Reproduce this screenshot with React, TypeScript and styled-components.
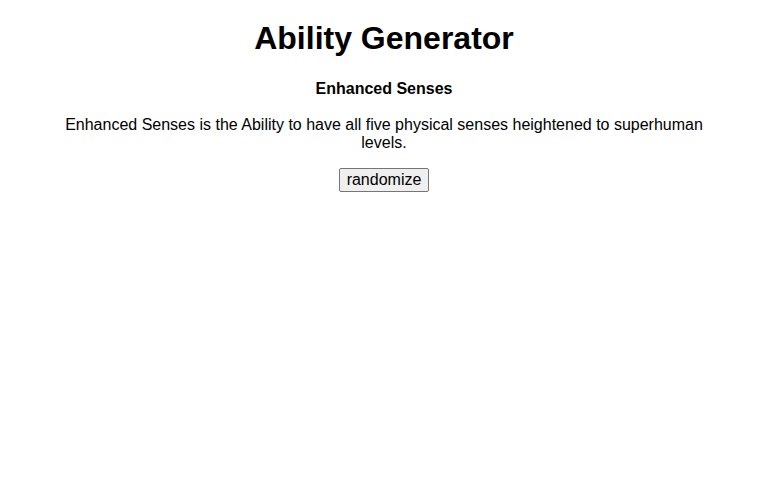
import React from "react";
import styled, { createGlobalStyle } from "styled-components";

const Global = createGlobalStyle`
  body {
    margin: 8px;
    background: #ffffff;
    color: #000000;
    font-family: "Liberation Sans", Arial, sans-serif;
  }
`;

const Page = styled.div`
  display: flex;
  flex-direction: column;
  align-items: center;
  text-align: center;
`;

const Title = styled.h1`
  font-size: 32px;
  font-weight: bold;
  margin: 11.5px 0 23.5px;
`;

const AbilityName = styled.h4`
  font-size: 16px;
  font-weight: bold;
  margin: 0 0 18px;
`;

const Description = styled.p`
  font-size: 16px;
  max-width: 660px;
  margin: 0 0 16px;
`;

const Button = styled.button`
  font-family: "Liberation Sans", Arial, sans-serif;
  font-size: 16px;
  color: #000;
  background: #efefef;
  border: 1px solid #767676;
  border-radius: 2px;
  padding: 2px 7px;
`;

export default function App() {
  return (
    <>
      <Global />
      <Page>
        <Title>Ability Generator</Title>
        <AbilityName>Enhanced Senses</AbilityName>
        <Description>
          Enhanced Senses is the Ability to have all five physical senses heightened to superhuman levels.
        </Description>
        <Button>randomize</Button>
      </Page>
    </>
  );
}
